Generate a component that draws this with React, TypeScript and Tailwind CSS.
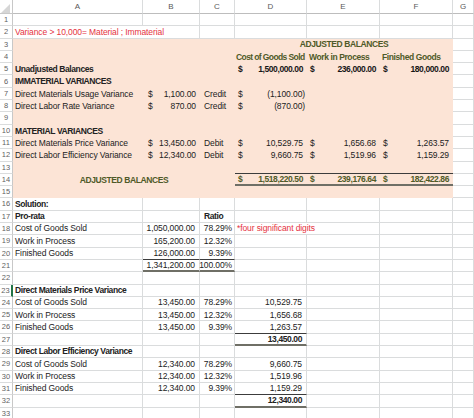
import { Fragment } from "react";

type Cell = {
  v?: string;
  cur?: boolean;
  al?: "l" | "r" | "c";
  b?: boolean;
  tone?: "red" | "olive" | "dark";
  span?: number;
  line?: "under" | "double";
  spill?: boolean;
  paren?: boolean;
  tight?: boolean;
};

type Row = Partial<Record<string, Cell>>;

const COLS = ["A", "B", "C", "D", "E", "F", "G"];

const money = (v: string, extra: Partial<Cell> = {}): Cell => ({ v, cur: true, al: "r", ...extra });
const num = (v: string, extra: Partial<Cell> = {}): Cell => ({ v, al: "r", ...extra });
const txt = (v: string, extra: Partial<Cell> = {}): Cell => ({ v, ...extra });

const rows: Row[] = [
  {},
  { A: txt("Variance > 10,000= Material ; Immaterial", { tone: "red", spill: true }) },
  { D: txt("ADJUSTED BALANCES", { b: true, tone: "olive", al: "c", span: 3 }) },
  {
    D: txt("Cost of Goods Sold", { b: true, tone: "olive", tight: true }),
    E: txt("Work in Process", { b: true, tone: "olive" }),
    F: txt("Finished Goods", { b: true, tone: "olive" }),
  },
  {
    A: txt("Unadjusted Balances", { b: true }),
    D: money("1,500,000.00", { b: true, tone: "dark" }),
    E: money("236,000.00", { b: true, tone: "dark" }),
    F: money("180,000.00", { b: true, tone: "dark" }),
  },
  { A: txt("IMMATERIAL VARIANCES", { b: true }) },
  {
    A: txt("Direct Materials Usage Variance"),
    B: money("1,100.00"),
    C: txt("Credit"),
    D: money("(1,100.00)", { paren: true }),
  },
  {
    A: txt("Direct Labor Rate Variance"),
    B: money("870.00"),
    C: txt("Credit"),
    D: money("(870.00)", { paren: true }),
  },
  {},
  { A: txt("MATERIAL VARIANCES", { b: true }) },
  {
    A: txt("Direct Materials Price Variance"),
    B: money("13,450.00"),
    C: txt("Debit"),
    D: money("10,529.75"),
    E: money("1,656.68"),
    F: money("1,263.57"),
  },
  {
    A: txt("Direct Labor Efficiency Variance"),
    B: money("12,340.00"),
    C: txt("Debit"),
    D: money("9,660.75"),
    E: money("1,519.96"),
    F: money("1,159.29"),
  },
  // row 13 carries the single rule above the adjusted totals
  { D: { line: "under" }, E: { line: "under" }, F: { line: "under" } },
  {
    A: txt("ADJUSTED BALANCES", { b: true, tone: "olive", al: "c", span: 3 }),
    D: money("1,518,220.50", { b: true, tone: "olive", line: "double" }),
    E: money("239,176.64", { b: true, tone: "olive", line: "double" }),
    F: money("182,422.86", { b: true, tone: "olive", line: "double" }),
  },
  {},
  { A: txt("Solution:", { b: true }) },
  { A: txt("Pro-rata", { b: true }), C: txt("Ratio", { b: true }) },
  {
    A: txt("Cost of Goods Sold"),
    B: num("1,050,000.00"),
    C: num("78.29%"),
    D: txt("*four significant digits", { tone: "red", spill: true }),
  },
  { A: txt("Work in Process"), B: num("165,200.00"), C: num("12.32%") },
  {
    A: txt("Finished Goods"),
    B: num("126,000.00", { line: "under" }),
    C: num("9.39%", { line: "under" }),
  },
  { B: num("1,341,200.00", { line: "double" }), C: num("100.00%", { line: "double" }) },
  {},
  { A: txt("Direct Materials Price Variance", { b: true }) },
  { A: txt("Cost of Goods Sold"), B: num("13,450.00"), C: num("78.29%"), D: num("10,529.75") },
  { A: txt("Work in Process"), B: num("13,450.00"), C: num("12.32%"), D: num("1,656.68") },
  {
    A: txt("Finished Goods"),
    B: num("13,450.00"),
    C: num("9.39%"),
    D: num("1,263.57", { line: "under" }),
  },
  { D: num("13,450.00", { b: true, line: "double" }) },
  { A: txt("Direct Labor Efficiency Variance", { b: true }) },
  { A: txt("Cost of Goods Sold"), B: num("12,340.00"), C: num("78.29%"), D: num("9,660.75") },
  { A: txt("Work in Process"), B: num("12,340.00"), C: num("12.32%"), D: num("1,519.96") },
  {
    A: txt("Finished Goods"),
    B: num("12,340.00"),
    C: num("9.39%"),
    D: num("1,159.29", { line: "under" }),
  },
  { D: num("12,340.00", { b: true, line: "double" }) },
  {},
];

const toneClass = (t?: Cell["tone"]) =>
  t === "red" ? "text-[#e5323e]" : t === "olive" ? "text-[#4f5a28]" : t === "dark" ? "text-[#161616]" : "text-[#222]";

function SheetCell({ cell, col, filled }: { cell: Cell; col: string; filled: boolean }) {
  const salmon = filled && col !== "G";
  const cls = ["flex items-center whitespace-nowrap leading-none min-w-0"];

  if (salmon) cls.push("bg-[#fce4d6]");
  if (!salmon && !cell.spill) cls.push("border-r border-r-[#dadcdd]");
  if (cell.line === "under") cls.push("border-b border-b-[#3c3c3c]");
  else if (cell.line === "double") cls.push("border-b-2 border-b-[#6f6f66]");
  else if (!salmon) cls.push("border-b border-b-[#dadcdd]");
  if (cell.span === 3) cls.push("col-span-3");

  if (cell.tight) cls.push("font-bold tracking-[-0.6px]");
  else cls.push(cell.b ? "font-bold tracking-[-0.4px]" : "tracking-[-0.1px]");
  cls.push(toneClass(cell.tone));

  if (cell.cur) {
    cls.push("justify-between", col === "B" ? "pl-[5px]" : "pl-[3px]", cell.paren ? "pr-[2px]" : "pr-[4px]");
    return (
      <div className={cls.join(" ")}>
        <span>$</span>
        <span>{cell.v}</span>
      </div>
    );
  }

  if (cell.al === "r") cls.push("justify-end", col === "C" ? "pr-[2px]" : "pr-[4px]");
  else if (cell.al === "c") cls.push("justify-center");
  else cls.push(col === "C" ? "pl-[4px]" : cell.tight ? "pl-[1px]" : "pl-[2px]");

  return (
    <div className={cls.join(" ")}>
      <span>{cell.v ?? ""}</span>
    </div>
  );
}

export default function App() {
  return (
    <div className="w-[474px] h-[418px] overflow-hidden bg-white font-['Liberation_Sans',Arial,sans-serif] text-[8.5px]">
      <div className="grid grid-cols-[13px_130px_57px_35px_72px_73px_73px_1fr] grid-rows-[14px_repeat(33,12.3px)]">
        {/* column headers */}
        <div className="relative border-r border-b border-[#c8c8c8]">
          <svg className="absolute left-[1px] top-[4px]" width="10" height="9" viewBox="0 0 10 9">
            <polygon points="9,0 9,9 0,9" fill="#d6d6d6" />
          </svg>
        </div>
        {COLS.map((c) => (
          <div
            key={c}
            className="flex items-center justify-center border-r border-r-[#dadcdd] border-b border-b-[#bdbdbd] text-[8px] text-[#595959]"
          >
            {c}
          </div>
        ))}

        {rows.map((row, i) => {
          const n = i + 1;
          const filled = n >= 3 && n <= 15;
          const cells = [];
          for (let c = 0; c < COLS.length; c++) {
            const col = COLS[c];
            const cell = row[col] ?? {};
            cells.push(<SheetCell key={col} cell={cell} col={col} filled={filled} />);
            if (cell.span) c += cell.span - 1;
          }
          return (
            <Fragment key={n}>
              <div
                className={`flex items-center justify-center border-b border-b-[#dadcdd] text-[7.5px] text-[#5f5f5f] ${
                  n === 23 ? "border-r-2 border-r-[#217346]" : "border-r border-r-[#c8c8c8]"
                }`}
              >
                {n}
              </div>
              {cells}
            </Fragment>
          );
        })}
      </div>
    </div>
  );
}
